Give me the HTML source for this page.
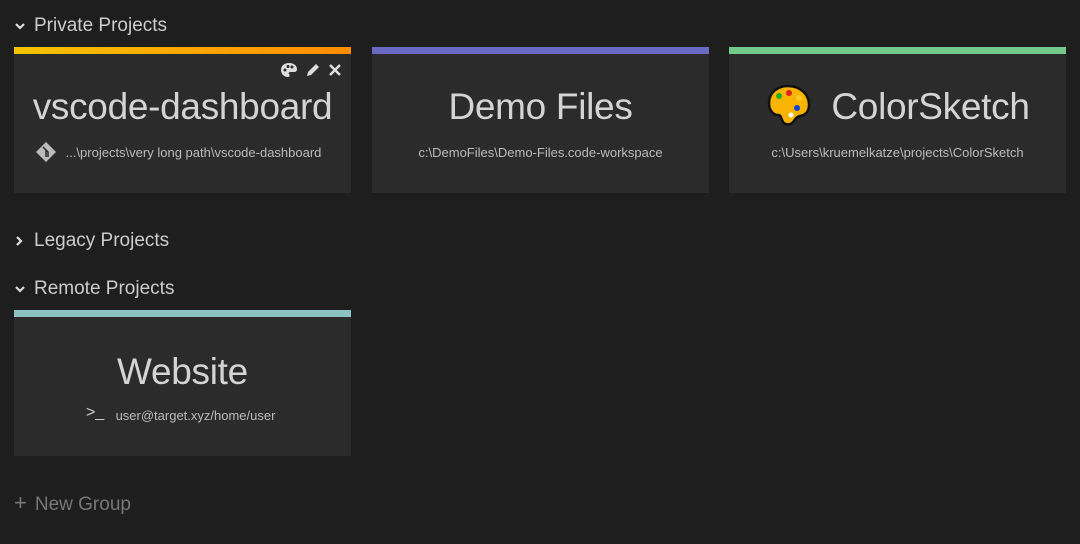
<!DOCTYPE html><html><head><style>
body{margin:0;width:1080px;height:544px;background:#1e1e1e;font-family:"Liberation Sans",sans-serif;color:#ccc;position:relative;overflow:hidden}
.h{position:absolute;left:14px;font-size:19px;color:#ccc}
.h svg{vertical-align:middle;margin-right:8px}
.card{position:absolute;width:337px;background:#2b2b2b;border-top:7px solid}
.t{position:absolute;left:0;right:0;text-align:center;font-size:37px;color:#d4d4d4;letter-spacing:-0.3px}
.p{position:absolute;left:0;right:0;text-align:center;font-size:13px;color:#bbb}
</style></head><body>
<div class="h" style="top:15px"><svg width="12" height="10" viewBox="0 0 12 10"><path d="M2 3l4 4 4-4" stroke="#ddd" stroke-width="2.2" fill="none"/></svg>Private Projects</div>
<div class="card" style="left:14px;top:47px;height:139px;border-image:linear-gradient(90deg,#f5c400,#ff8c00) 1">
 <div style="position:absolute;right:9px;top:8px;display:flex;gap:7px">
  <svg width="18" height="16" viewBox="0 0 18 16"><path d="M9 1C4 1 1 4 1 8s3 7 7 7c2 0 2-2 1-3s0-2 2-2h3c2 0 3-1 3-3 0-3-3-6-8-6z" fill="#ddd"/><circle cx="5" cy="8" r="1.5" fill="#2b2b2b"/><circle cx="8" cy="4.5" r="1.5" fill="#2b2b2b"/><circle cx="12" cy="5" r="1.5" fill="#2b2b2b"/></svg>
  <svg width="16" height="16" viewBox="0 0 16 16"><path d="M2 14l1-4 8-8 3 3-8 8z" fill="#ddd"/></svg>
  <svg width="14" height="16" viewBox="0 0 14 16"><path d="M2 3l10 10M12 3L2 13" stroke="#ddd" stroke-width="2.5"/></svg>
 </div>
 <div class="t" style="top:32px">vscode-dashboard</div>
 <div class="p" style="top:91px;padding-left:22px"><svg style="position:absolute;left:21px;top:-4px" width="22" height="22" viewBox="0 0 22 22"><path d="M11 1l10 10-10 10L1 11z" fill="#bbb"/><path d="M8 6l5 5v5M11 9v7" stroke="#2b2b2b" stroke-width="1.5" fill="none"/></svg>...\projects\very long path\vscode-dashboard</div>
</div>
<div class="card" style="left:372px;top:47px;height:139px;border-color:#6a6ac4">
 <div class="t" style="top:32px">Demo Files</div>
 <div class="p" style="top:91px">c:\DemoFiles\Demo-Files.code-workspace</div>
</div>
<div class="card" style="left:729px;top:47px;height:139px;border-color:#72c98a">
 <div class="t" style="top:32px;padding-left:66px">ColorSketch</div>
 <svg style="position:absolute;left:37px;top:28px" width="46" height="46" viewBox="0 0 46 46"><path d="M22 4C11 4 3 11 3 21c0 7 4 12 9 12 3 0 3 3 5 7 2 3 7 3 9 1 3-2 3-6 8-7 6-1 9-5 9-11C43 12 34 4 22 4z" fill="#f8b400" stroke="#111" stroke-width="2.5"/><circle cx="13" cy="14" r="3" fill="#2a2"/><circle cx="23" cy="11" r="3" fill="#d22"/><circle cx="33" cy="16" r="3" fill="#fc2"/><circle cx="31" cy="26" r="3" fill="#14c"/><circle cx="25" cy="33" r="2.5" fill="#fff"/></svg>
 <div class="p" style="top:91px">c:\Users\kruemelkatze\projects\ColorSketch</div>
</div>
<div class="h" style="top:230px"><svg width="12" height="10" viewBox="0 0 12 10"><path d="M3 1l4 4-4 4" stroke="#ddd" stroke-width="2.2" fill="none"/></svg>Legacy Projects</div>
<div class="h" style="top:278px"><svg width="12" height="10" viewBox="0 0 12 10"><path d="M2 3l4 4 4-4" stroke="#ddd" stroke-width="2.2" fill="none"/></svg>Remote Projects</div>
<div class="card" style="left:14px;top:310px;height:139px;border-color:#8cc2c2">
 <div class="t" style="top:34px">Website</div>
 <div class="p" style="top:91px;padding-left:26px"><span style="position:absolute;left:72px;top:-4px;font-size:16px;color:#ccc">&gt;_</span>user@target.xyz/home/user</div>
</div>
<div class="h" style="top:490px;color:#777;font-size:19px"><span style="font-size:22px;margin-right:8px">+</span>New Group</div>
</body></html>
